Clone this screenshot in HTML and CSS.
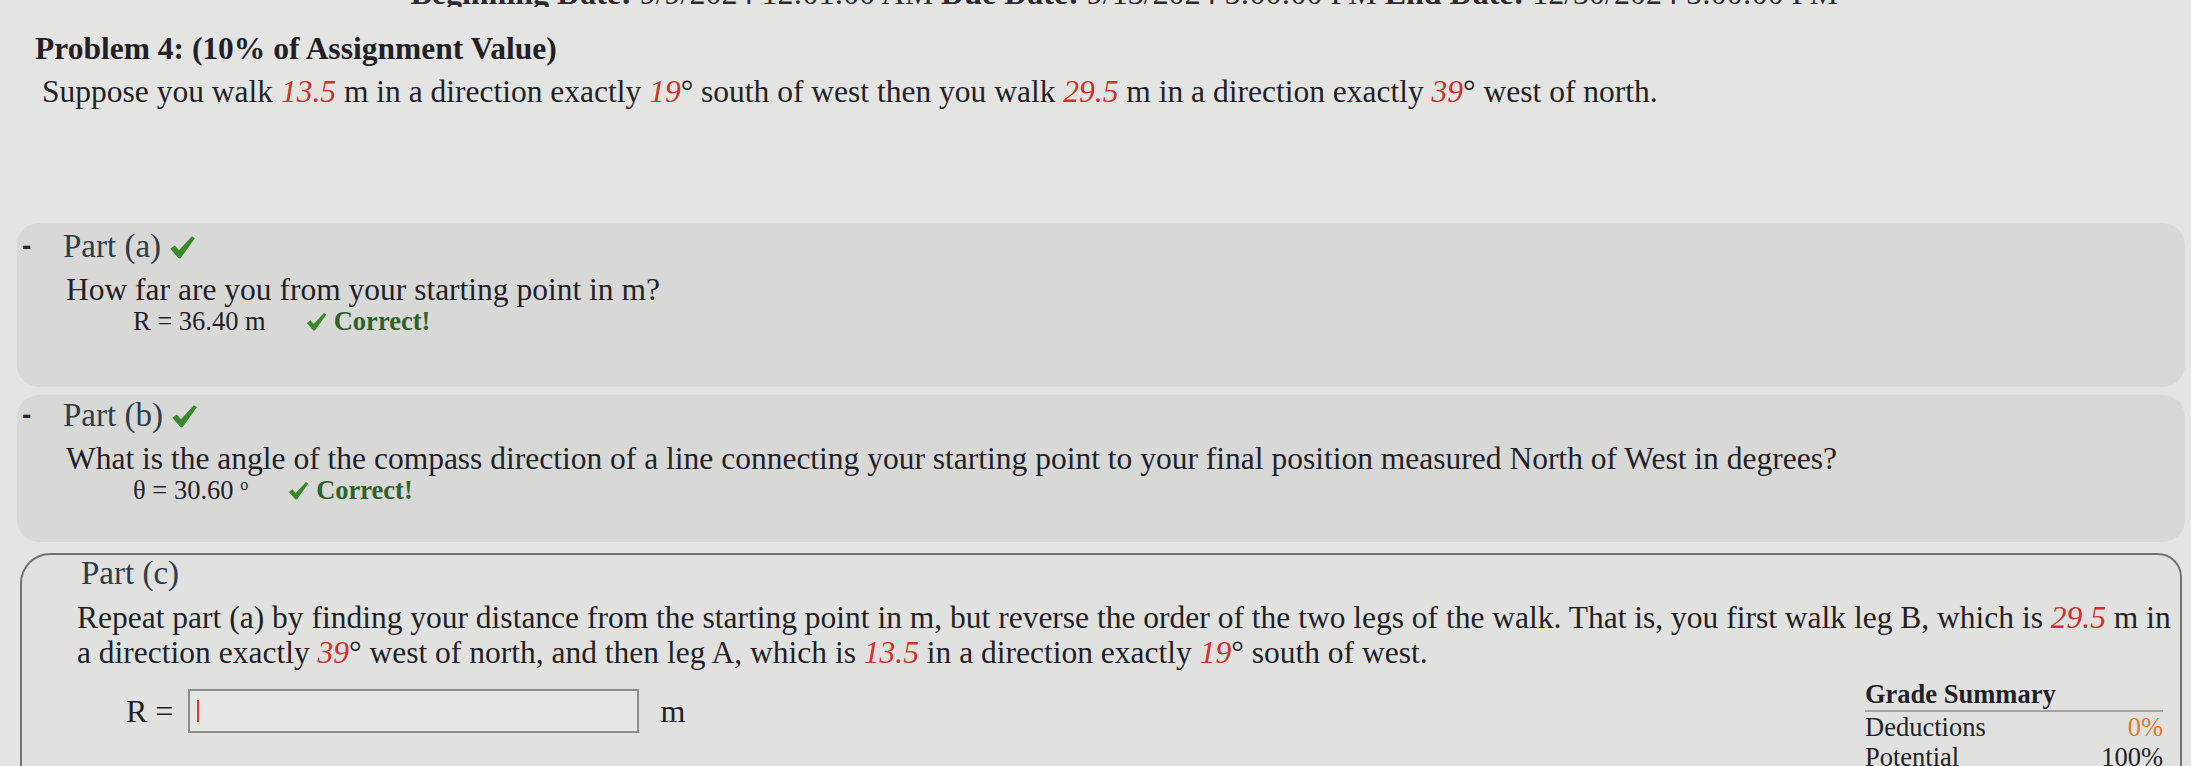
FILE: index.html
```html
<!DOCTYPE html>
<html lang="en">
<head>
<meta charset="utf-8">
<title>Problem 4</title>
<link rel="stylesheet" href="styles.css">
</head>
<body>
<div class="dates"><div class="dates-inner"><b>Beginning Date:</b> 9/9/2024 12:01:00 AM <b>Due Date:</b> 9/13/2024 5:00:00 PM <b>End Date:</b> 12/30/2024 5:00:00 PM</div></div>

<h2 class="problem-title">Problem 4: (10% of Assignment Value)</h2>
<p class="problem-text">Suppose you walk <i class="num">13.5</i> m in a direction exactly <i class="num">19</i>° south of west then you walk <i class="num">29.5</i> m in a direction exactly <i class="num">39</i>° west of north.</p>

<div class="parts">
  <section class="part part-a">
    <div class="part-head"><span class="toggle">-</span><span class="part-label">Part (a)</span> <svg class="check-lg" viewBox="0 0 24 22"><path d="M0.8 12.6 L5 9.6 L8.8 14 L20.6 1.2 L23.4 3 L10.2 21.4 L8.4 21.4 Z"/></svg></div>
    <p class="question">How far are you from your starting point in m?</p>
    <div class="answer"><span>R = 36.40 m</span><span class="correct"><svg class="check-sm" viewBox="0 0 24 22"><path d="M0.8 12.6 L5 9.6 L8.8 14 L20.6 1.2 L23.4 3 L10.2 21.4 L8.4 21.4 Z"/></svg>Correct!</span></div>
  </section>

  <section class="part part-b">
    <div class="part-head"><span class="toggle">-</span><span class="part-label">Part (b)</span> <svg class="check-lg" viewBox="0 0 24 22"><path d="M0.8 12.6 L5 9.6 L8.8 14 L20.6 1.2 L23.4 3 L10.2 21.4 L8.4 21.4 Z"/></svg></div>
    <p class="question">What is the angle of the compass direction of a line connecting your starting point to your final position measured North of West in degrees?</p>
    <div class="answer"><span>θ = 30.60 <sup class="deg">o</sup></span><span class="correct"><svg class="check-sm" viewBox="0 0 24 22"><path d="M0.8 12.6 L5 9.6 L8.8 14 L20.6 1.2 L23.4 3 L10.2 21.4 L8.4 21.4 Z"/></svg>Correct!</span></div>
  </section>

  <section class="part part-c">
    <div class="part-head"><span class="part-label">Part (c)</span></div>
    <p class="question">Repeat part (a) by finding your distance from the starting point in m, but reverse the order of the two legs of the walk. That is, you first walk leg B, which is <i class="num">29.5</i> m in a direction exactly <i class="num">39</i>° west of north, and then leg A, which is <i class="num">13.5</i> in a direction exactly <i class="num">19</i>° south of west.</p>
    <div class="answer-row">
      <div class="entry">
        <span class="entry-label">R =</span>
        <span class="field"><span class="caret"></span></span>
        <span class="unit">m</span>
      </div>
      <div class="grade">
        <div class="grade-title">Grade Summary</div>
        <div class="grade-row"><span>Deductions</span><span class="pct-orange">0%</span></div>
        <div class="grade-row"><span>Potential</span><span>100%</span></div>
      </div>
    </div>
  </section>
</div>
</body>
</html>
```
FILE: styles.css
```css
html, body {
  margin: 0;
  padding: 0;
}
body {
  background: #e4e5e3;
  font-family: "Liberation Serif", "Times New Roman", serif;
  color: #231f27;
  overflow: hidden;
}

.dates {
  height: 7px;
  overflow: hidden;
}
.dates-inner {
  margin-top: -24px;
  font-size: 32px;
  line-height: 34px;
  text-align: right;
  padding-right: 353px;
  white-space: nowrap;
  color: #2b2a2d;
}

.problem-title {
  margin: 24px 0 0 35px;
  font-size: 31.5px;
  line-height: 36px;
  font-weight: bold;
}
.problem-text {
  margin: 7px 0 0 42px;
  font-size: 31.5px;
  line-height: 35px;
}
.num {
  color: #d2322b;
}

.parts {
  margin-top: 114px;
  padding: 0 6px 0 17px;
  display: flex;
  flex-direction: column;
}

.part {
  background: #d8d9d7;
  border-radius: 22px;
  padding-left: 5px;
}
.part-a {
  padding-top: 4px;
  padding-bottom: 52px;
}
.part-b {
  margin-top: 8px;
  padding-top: 1px;
  padding-bottom: 38px;
}

.part-head {
  font-size: 33px;
  line-height: 38px;
  white-space: nowrap;
}
.toggle {
  display: inline-block;
  width: 41px;
  font-weight: bold;
  font-family: "Liberation Sans", Arial, sans-serif;
  font-size: 28px;
  color: #2a2a2e;
  vertical-align: 2px;
}
.part-label {
  color: #2c3d4b;
}
.check-lg {
  width: 27px;
  height: 24px;
  fill: #3a8a2c;
  vertical-align: -2px;
}
.check-sm {
  width: 21px;
  height: 19px;
  fill: #3a8a2c;
}

.question {
  margin: 8px 0 0 44px;
  font-size: 31.5px;
  line-height: 34px;
}
.answer {
  margin-left: 111px;
  font-size: 26.5px;
  line-height: 28px;
  display: flex;
  align-items: center;
  gap: 40px;
}
.deg {
  font-size: 16px;
  vertical-align: 9px;
  line-height: 0;
}
.correct {
  display: inline-flex;
  align-items: center;
  gap: 7px;
  font-weight: bold;
  color: #2e622c;
}

.part-c {
  margin: 11px 3px 0 3px;
  background: #e1e2e0;
  border: 2px solid #737472;
  border-bottom: none;
  border-radius: 30px 24px 0 0;
  padding: 0 0 60px 0;
}
.part-c .part-head {
  padding-left: 59px;
  line-height: 36px;
}
.part-c .question {
  margin: 9px 6px 0 55px;
  line-height: 35px;
  font-size: 31.5px;
}

.answer-row {
  margin-top: 9px;
  display: flex;
  align-items: flex-start;
}
.entry {
  margin: 10px 0 0 104px;
  display: flex;
  align-items: center;
  font-size: 32px;
}
.entry-label {
  margin-right: 15px;
}
.field {
  box-sizing: border-box;
  width: 451px;
  height: 44px;
  border: 2px solid #8b8c8a;
  background: #e6e7e5;
  display: flex;
  align-items: center;
  padding-left: 7px;
}
.caret {
  width: 2px;
  height: 22px;
  background: #e0392f;
}
.unit {
  margin-left: 21px;
}

.grade {
  margin-left: auto;
  margin-right: 17px;
  width: 298px;
  font-size: 26.5px;
  line-height: 30px;
}
.grade-title {
  font-weight: bold;
  padding-bottom: 1px;
  border-bottom: 2px solid #a3a4a2;
}
.grade-row {
  display: flex;
  justify-content: space-between;
}
.pct-orange {
  color: #e07a2c;
}
```
